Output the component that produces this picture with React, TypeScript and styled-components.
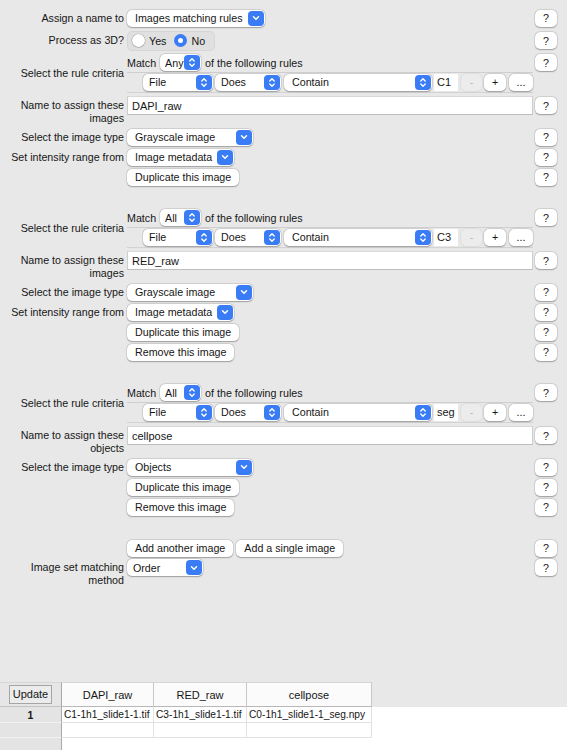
import React from "react";
import styled, { createGlobalStyle } from "styled-components";

type Block = {
  match: string;
  value: string;
  noun: string;
  name: string;
  type: string;
  typeWidth: number;
  intensity: boolean;
  remove: boolean;
};

const blocks: Block[] = [
  {
    match: "Any",
    value: "C1",
    noun: "images",
    name: "DAPI_raw",
    type: "Grayscale image",
    typeWidth: 126,
    intensity: true,
    remove: false,
  },
  {
    match: "All",
    value: "C3",
    noun: "images",
    name: "RED_raw",
    type: "Grayscale image",
    typeWidth: 126,
    intensity: true,
    remove: true,
  },
  {
    match: "All",
    value: "seg",
    noun: "objects",
    name: "cellpose",
    type: "Objects",
    typeWidth: 126,
    intensity: false,
    remove: true,
  },
];

const rows = [["C1-1h1_slide1-1.tif", "C3-1h1_slide1-1.tif", "C0-1h1_slide1-1_seg.npy"]];

const GlobalStyle = createGlobalStyle`
  html, body {
    margin: 0;
    padding: 0;
  }
  body {
    background: #e8e8e8;
    font-family: "Liberation Sans", Arial, sans-serif;
    font-size: 10.7px;
    color: #161616;
  }
`;

const Page = styled.div`
  display: flex;
  flex-direction: column;
  height: 750px;
`;

const Form = styled.div`
  padding-top: 8px;
`;

const Section = styled.div`
  margin-bottom: 21px;
`;

const Row = styled.div<{ $top?: boolean; $h?: number }>`
  display: grid;
  grid-template-columns: 127px 408px 22px;
  align-items: ${(p) => (p.$top ? "start" : "center")};
  min-height: ${(p) => p.$h ?? 20}px;
`;

const Label = styled.div<{ $pad?: number; $center?: boolean }>`
  text-align: right;
  padding-right: 3px;
  line-height: 13px;
  padding-top: ${(p) => p.$pad ?? 0}px;
  align-self: ${(p) => (p.$center ? "center" : "auto")};
`;

const Control = styled.div<{ $pad?: number }>`
  display: flex;
  flex-direction: column;
  align-items: flex-start;
  padding-top: ${(p) => p.$pad ?? 0}px;
`;

const Inline = styled.div`
  display: flex;
  align-items: center;
  gap: 3px;
`;

const raised = `
  background: #fff;
  border-radius: 5px;
  box-shadow: 0 0 0 0.5px rgba(0, 0, 0, 0.13), 0 0.6px 1.4px rgba(0, 0, 0, 0.28);
`;

const PopUp = styled.div<{ $w: number }>`
  ${raised}
  display: flex;
  align-items: center;
  justify-content: space-between;
  box-sizing: border-box;
  width: ${(p) => p.$w}px;
  height: 17px;
  padding: 0 1px 0 ${(p) => (p.$w < 50 ? 5 : p.$w < 80 ? 6 : 8)}px;
  margin: 1px 0;
  white-space: nowrap;
`;

const Indicator = styled.span`
  display: flex;
  align-items: center;
  justify-content: center;
  width: 16px;
  height: 15px;
  border-radius: 4px;
  background: #3a7bf6;
`;

const PushButton = styled.div<{ $w?: number; $disabled?: boolean }>`
  ${raised}
  display: flex;
  align-items: center;
  justify-content: center;
  box-sizing: border-box;
  height: 17px;
  padding: 0 8px;
  ${(p) => (p.$w ? `width: ${p.$w}px; padding: 0;` : "")}
  margin: 1.5px 0;
  white-space: nowrap;
  ${(p) =>
    p.$disabled
      ? "background: #ececec; color: #b8b8b8; box-shadow: 0 0 0 0.5px rgba(0,0,0,0.08);"
      : ""}
`;

const HelpButton = styled(PushButton)<{ $offset?: number }>`
  width: 22px;
  padding: 0;
  margin-top: ${(p) => p.$offset ?? 1.5}px;
`;

const TextInput = styled.div`
  box-sizing: border-box;
  width: 406px;
  height: 19px;
  padding: 0 4px;
  line-height: 18px;
  background: #fff;
  border: 1px solid #cdcdcd;
  border-top-color: #d8d8d8;
  border-bottom-color: #bdbdbd;
  font-size: 11px;
`;

const SmallField = styled.div`
  width: 24px;
  height: 17px;
  box-sizing: border-box;
  padding-left: 3px;
  line-height: 17px;
  background: #fff;
  font-size: 11px;
`;

const RadioGroup = styled.div`
  display: flex;
  align-items: center;
  gap: 4px;
  box-sizing: border-box;
  width: 88px;
  height: 20px;
  padding: 0 4px;
  border-radius: 5px;
  background: #e0e0e0;
  border: 1px solid #d6d6d6;
`;

const RadioItem = styled.span`
  display: flex;
  align-items: center;
  gap: 4px;
  margin-right: 4px;
`;

const RadioDot = styled.span<{ $on?: boolean }>`
  display: flex;
  align-items: center;
  justify-content: center;
  width: 13px;
  height: 13px;
  box-sizing: border-box;
  border-radius: 50%;
  background: ${(p) => (p.$on ? "#3a7bf6" : "#fff")};
  box-shadow: ${(p) =>
    p.$on ? "none" : "0 0 0 0.5px rgba(0,0,0,0.2), 0 0.5px 1px rgba(0,0,0,0.25)"};
  &::after {
    content: "";
    width: 5px;
    height: 5px;
    border-radius: 50%;
    background: ${(p) => (p.$on ? "#fff" : "transparent")};
  }
`;

const MatchLine = styled.div`
  display: flex;
  align-items: center;
  gap: 4px;
  height: 19px;
`;

const RuleRow = styled.div`
  display: flex;
  align-items: center;
  box-sizing: border-box;
  width: 406px;
  height: 21px;
  padding: 0 0 1px 16px;
  border-top: 1px solid #cfcfcf;
  border-bottom: 1px solid #d3d3d3;
`;

const Gap = styled.span<{ $w: number }>`
  width: ${(p) => p.$w}px;
  flex: none;
`;

/* table at the bottom of the window */

const Grid = styled.div`
  margin-top: auto;
  display: grid;
  grid-template-columns: 62px 92px 93px 125px 1fr;
  grid-template-rows: 25px 16px 15px 12px;
`;

const Corner = styled.div`
  display: flex;
  align-items: center;
  justify-content: center;
  background: #e6e6e6;
  border-top: 1px solid #d6d6d6;
  border-right: 1px solid #a9a9a9;
  border-bottom: 1px solid #c4c4c4;
`;

const UpdateButton = styled.div`
  box-sizing: border-box;
  height: 19px;
  padding: 0 3px;
  line-height: 17px;
  background: #ececec;
  border: 1px solid #a5a5a5;
  font-size: 11px;
`;

const ColHeader = styled.div`
  display: flex;
  align-items: center;
  justify-content: center;
  background: #fbfbfb;
  border-top: 1px solid #d6d6d6;
  border-right: 1px solid #c8c8c8;
  border-bottom: 1px solid #b8b8b8;
  font-size: 11px;
`;

const HeaderFill = styled.div`
  background: #e8e8e8;
`;

const RowLabel = styled.div`
  display: flex;
  align-items: center;
  justify-content: center;
  background: #e4e4e4;
  border-right: 1px solid #a9a9a9;
  border-bottom: 1px solid #f2f2f2;
  font-weight: bold;
  font-size: 10.5px;
`;

const Cell = styled.div`
  padding-left: 2px;
  line-height: 15px;
  background: #fff;
  border-right: 1px solid #e2e2e2;
  border-bottom: 1px solid #e2e2e2;
  white-space: nowrap;
  overflow: hidden;
  font-size: 10.2px;
`;

const Blank = styled.div<{ $span?: number }>`
  background: #fff;
  grid-column: span ${(p) => p.$span ?? 1};
`;

const ChevronDown = () => (
  <svg width="10" height="10" viewBox="0 0 10 10">
    <polyline
      points="2.5,3.8 5,6.3 7.5,3.8"
      fill="none"
      stroke="#fff"
      strokeWidth="1.5"
      strokeLinecap="round"
      strokeLinejoin="round"
    />
  </svg>
);

const ChevronUpDown = () => (
  <svg width="10" height="13" viewBox="0 0 10 13">
    <polyline
      points="2.8,5 5,2.8 7.2,5"
      fill="none"
      stroke="#fff"
      strokeWidth="1.4"
      strokeLinecap="round"
      strokeLinejoin="round"
    />
    <polyline
      points="2.8,8 5,10.2 7.2,8"
      fill="none"
      stroke="#fff"
      strokeWidth="1.4"
      strokeLinecap="round"
      strokeLinejoin="round"
    />
  </svg>
);

const Select = ({ value, width, stepper }: { value: string; width: number; stepper?: boolean }) => (
  <PopUp $w={width}>
    <span>{value}</span>
    <Indicator>{stepper ? <ChevronUpDown /> : <ChevronDown />}</Indicator>
  </PopUp>
);

const Help = ({ offset }: { offset?: number }) => <HelpButton $offset={offset}>?</HelpButton>;

const ImageBlock = ({ block }: { block: Block }) => (
  <Section>
    <Row $top>
      <Label $center>Select the rule criteria</Label>
      <Control>
        <MatchLine>
          <span>Match</span>
          <Select value={block.match} width={41} stepper />
          <span>of the following rules</span>
        </MatchLine>
        <RuleRow>
          <Select value="File" width={70} stepper />
          <Gap $w={2} />
          <Select value="Does" width={66} stepper />
          <Gap $w={3} />
          <Select value="Contain" width={148} stepper />
          <Gap $w={2} />
          <SmallField>{block.value}</SmallField>
          <Gap $w={3} />
          <PushButton $w={21} $disabled>
            -
          </PushButton>
          <Gap $w={2} />
          <PushButton $w={22}>+</PushButton>
          <Gap $w={3} />
          <PushButton $w={24}>...</PushButton>
        </RuleRow>
      </Control>
      <Help offset={1} />
    </Row>
    <Row $top $h={34}>
      <Label $pad={6}>
        Name to assign these
        <br />
        {block.noun}
      </Label>
      <Control $pad={3}>
        <TextInput>{block.name}</TextInput>
      </Control>
      <Help offset={4} />
    </Row>
    <Row>
      <Label>Select the image type</Label>
      <Control>
        <Select value={block.type} width={block.typeWidth} />
      </Control>
      <Help />
    </Row>
    {block.intensity && (
      <Row>
        <Label>Set intensity range from</Label>
        <Control>
          <Select value="Image metadata" width={107} />
        </Control>
        <Help />
      </Row>
    )}
    <Row>
      <Label />
      <Control>
        <PushButton>Duplicate this image</PushButton>
      </Control>
      <Help />
    </Row>
    {block.remove && (
      <Row>
        <Label />
        <Control>
          <PushButton>Remove this image</PushButton>
        </Control>
        <Help />
      </Row>
    )}
  </Section>
);

export default function App() {
  return (
    <Page>
      <GlobalStyle />
      <Form>
        <Row>
          <Label>Assign a name to</Label>
          <Control>
            <Select value="Images matching rules" width={138} />
          </Control>
          <Help />
        </Row>
        <Row $h={25}>
          <Label>Process as 3D?</Label>
          <Control>
            <RadioGroup>
              <RadioItem>
                <RadioDot />
                Yes
              </RadioItem>
              <RadioItem>
                <RadioDot $on />
                No
              </RadioItem>
            </RadioGroup>
          </Control>
          <Help />
        </Row>
        {blocks.map((b, i) => (
          <ImageBlock key={i} block={b} />
        ))}
        <Row>
          <Label />
          <Control>
            <Inline>
              <PushButton>Add another image</PushButton>
              <PushButton>Add a single image</PushButton>
            </Inline>
          </Control>
          <Help />
        </Row>
        <Row $top>
          <Label $pad={3}>
            Image set matching
            <br />
            method
          </Label>
          <Control>
            <Select value="Order" width={76} />
          </Control>
          <Help offset={1} />
        </Row>
      </Form>
      <Grid>
        <Corner>
          <UpdateButton>Update</UpdateButton>
        </Corner>
        <ColHeader>DAPI_raw</ColHeader>
        <ColHeader>RED_raw</ColHeader>
        <ColHeader>cellpose</ColHeader>
        <HeaderFill />
        {rows.map((r, i) => (
          <React.Fragment key={i}>
            <RowLabel>{i + 1}</RowLabel>
            {r.map((c) => (
              <Cell key={c}>{c}</Cell>
            ))}
            <Blank />
          </React.Fragment>
        ))}
        <RowLabel />
        <Cell />
        <Cell />
        <Cell />
        <Blank />
        <RowLabel style={{ borderBottom: "none" }} />
        <Blank $span={4} />
      </Grid>
    </Page>
  );
}
